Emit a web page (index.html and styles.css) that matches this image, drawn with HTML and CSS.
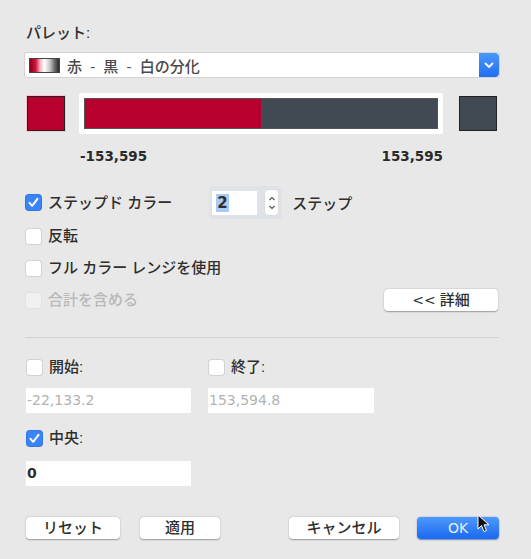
FILE: index.html
```html
<!DOCTYPE html>
<html lang="ja">
<head>
    <meta charset="UTF-8">
    <title>カラーの編集</title>
    <link rel="stylesheet" href="styles.css">
</head>
<body>
    <div class="dialog">
        <div class="field-label">パレット:</div>

        <!-- palette select -->
        <div class="select">
            <span class="select-ramp"></span>
            <span class="select-text">赤 - 黒 - 白の分化</span>
            <span class="select-arrow">
                <svg width="10" height="7" viewBox="0 0 10 7"><path d="M1.5 1.5 L5 5 L8.5 1.5" fill="none" stroke="#fff" stroke-width="1.8" stroke-linecap="round" stroke-linejoin="round"/></svg>
            </span>
        </div>

        <!-- color ramp preview -->
        <div class="ramp">
            <div class="swatch swatch-start"></div>
            <div class="ramp-frame">
                <div class="ramp-bar">
                    <div class="ramp-step ramp-red"></div>
                    <div class="ramp-step ramp-dark"></div>
                </div>
            </div>
            <div class="swatch swatch-end"></div>
        </div>
        <div class="ramp-values">
            <span>-153,595</span>
            <span>153,595</span>
        </div>

        <!-- options -->
        <div class="opt-row opt-first">
            <label class="check"><span class="box checked"></span>ステップド カラー</label>
            <div class="stepper-wrap">
                <div class="num-input"><span class="sel">2</span></div>
                <div class="stepper">
                    <svg width="8" height="18" viewBox="0 0 8 18"><path d="M1.5 6 L4 3.5 L6.5 6" fill="none" stroke="#555" stroke-width="1.2"/><path d="M1.5 12 L4 14.5 L6.5 12" fill="none" stroke="#555" stroke-width="1.2"/></svg>
                </div>
            </div>
            <span class="step-label">ステップ</span>
        </div>
        <div class="opt-row">
            <label class="check"><span class="box"></span>反転</label>
        </div>
        <div class="opt-row">
            <label class="check"><span class="box"></span>フル カラー レンジを使用</label>
        </div>
        <div class="opt-row opt-split">
            <label class="check disabled"><span class="box"></span>合計を含める</label>
            <button class="btn btn-detail"><span class="latin">&lt;&lt;</span> 詳細</button>
        </div>

        <div class="divider"></div>

        <!-- range -->
        <div class="range-grid">
            <label class="check"><span class="box"></span>開始:</label>
            <label class="check"><span class="box"></span>終了:</label>
            <div class="text-input placeholder">-22,133.2</div>
            <div class="text-input placeholder">153,594.8</div>
        </div>
        <div class="center-block">
            <label class="check"><span class="box checked"></span>中央:</label>
            <div class="text-input">0</div>
        </div>

        <!-- footer buttons -->
        <div class="footer">
            <div class="footer-left">
                <button class="btn btn-reset">リセット</button>
                <button class="btn btn-apply">適用</button>
            </div>
            <div class="footer-right">
                <button class="btn btn-cancel">キャンセル</button>
                <button class="btn btn-ok"><span class="latin">OK</span></button>
            </div>
            <svg class="cursor" width="14" height="20" viewBox="0 0 14 20"><path d="M1 1 L1 15 L4.5 11.5 L7 17.5 L9.5 16.5 L7 10.8 L12 10.8 Z" fill="#111" stroke="#fff" stroke-width="1"/></svg>
        </div>
    </div>
</body>
</html>
```

FILE: styles.css
```css
html, body {
    margin: 0;
    padding: 0;
}

body {
    width: 531px;
    height: 559px;
    background: #e8e8e8;
    font-family: 'Liberation Sans', 'Noto Sans CJK JP', sans-serif;
    font-size: 15px;
    color: #2e2e2e;
    overflow: hidden;
}

.latin {
    font-family: 'DejaVu Sans', sans-serif;
    font-size: 14px;
}

.dialog {
    box-sizing: border-box;
    height: 559px;
    padding: 23px 32px 0 25px;
    border-left: 2px solid #dadada;
    margin-left: -2px;
}

.field-label {
    line-height: 20px;
    height: 20px;
    font-weight: 500;
    padding-left: 1px;
}

/* palette select */
.select {
    margin-top: 10px;
    height: 24px;
    background: #fff;
    box-shadow: 0 0 0 1px #d4d4d4;
    display: flex;
    align-items: center;
    border-radius: 2px;
}

.select-ramp {
    width: 31px;
    height: 15px;
    margin-left: 4px;
    border: 1px solid #444;
    box-sizing: border-box;
    background: linear-gradient(90deg, #8c0020 0%, #d4143a 20%, #f6b7c0 35%, #ffffff 50%, #c9c9c9 68%, #6a6a6a 85%, #2a2a2a 100%);
}

.select-text {
    margin-left: 7px;
    flex: 1;
    color: #4a4a4a;
    font-weight: 500;
    word-spacing: 4px;
}

.select-arrow {
    width: 20px;
    height: 24px;
    background: linear-gradient(#4a97fb, #1f6ff3);
    border-radius: 0 4px 4px 0;
    display: flex;
    align-items: center;
    justify-content: center;
}

/* ramp preview */
.ramp {
    margin-top: 15px;
    height: 42px;
    display: flex;
    align-items: center;
}

.swatch {
    width: 38px;
    height: 35px;
    box-sizing: border-box;
    border: 1px solid #222;
}

.swatch-start {
    margin-left: 2px;
    background: #b8002e;
    box-shadow: 0 0 0 1px #f3c6d0;
}

.swatch-end {
    margin-left: 16px;
    background: #414a53;
}

.ramp-frame {
    margin-left: 14px;
    width: 364px;
    height: 41px;
    box-sizing: border-box;
    background: #fff;
    padding: 5px 5px;
    border-radius: 2px;
}

.ramp-bar {
    display: flex;
    height: 31px;
    border: 1px solid #555;
    box-sizing: border-box;
}

.ramp-step {
    flex: 1;
}

.ramp-red {
    background: #b8002e;
}

.ramp-dark {
    background: #414a53;
}

.ramp-values {
    margin-top: 12px;
    height: 20px;
    line-height: 20px;
    width: 418px;
    padding-left: 55px;
    box-sizing: border-box;
    display: flex;
    justify-content: space-between;
    font-family: 'DejaVu Sans', sans-serif;
    font-weight: bold;
    font-size: 13.5px;
    color: #2a2a2a;
}

/* options */
.opt-row {
    height: 32px;
    display: flex;
    align-items: center;
}

.opt-first {
    margin-top: 19px;
    height: 35px;
}

.opt-split {
    justify-content: space-between;
}

.check {
    display: flex;
    align-items: center;
    gap: 7px;
    line-height: 20px;
    font-weight: 500;
}

.check.disabled {
    color: #b9b9b9;
}

.box {
    width: 15px;
    height: 15px;
    box-sizing: border-box;
    background: #fff;
    border-radius: 3px;
    box-shadow: 0 0 0 1px #d2d2d2;
    margin-left: 1px;
}

.check.disabled .box {
    background: #f1f1f1;
    box-shadow: 0 0 0 1px #e2e2e2;
}

.box.checked {
    background: #3a84f6 url("data:image/svg+xml;utf8,<svg xmlns='http://www.w3.org/2000/svg' width='15' height='15' viewBox='0 0 15 15'><path d='M3.5 7.8 L6.2 10.8 L11.5 3.8' fill='none' stroke='white' stroke-width='2' stroke-linecap='round' stroke-linejoin='round'/></svg>") no-repeat center;
    box-shadow: 0 0 0 1px #2f76e8;
}

.stepper-wrap {
    margin-left: 37px;
    display: flex;
    align-items: center;
    gap: 8px;
    padding: 4px 4px 4px 3px;
    background: #dfe2e7;
    border-radius: 3px;
}

.num-input {
    width: 45px;
    height: 24px;
    background: #fff;
    line-height: 24px;
    padding-left: 4px;
    box-sizing: border-box;
    font-family: 'DejaVu Sans', sans-serif;
    font-weight: bold;
    font-size: 15px;
}

.sel {
    background: #a9cbf6;
    padding: 0 1px;
}

.stepper {
    width: 13px;
    height: 25px;
    background: #fff;
    border-radius: 4px;
    display: flex;
    align-items: center;
    justify-content: center;
    box-shadow: 0 0 0 1px #dcdcdc;
}

.step-label {
    margin-left: 10px;
    font-weight: 500;
}

/* buttons */
.btn {
    font-family: inherit;
    font-size: 15px;
    font-weight: 500;
    color: #2e2e2e;
    background: #fff;
    border: none;
    border-radius: 4px;
    box-shadow: 0 0.5px 1.5px rgba(0, 0, 0, 0.35);
    height: 22px;
    padding: 0;
    line-height: 22px;
}

.btn-detail {
    width: 114px;
    margin-right: 1px;
}

.divider {
    margin-top: 21px;
    height: 1px;
    background: #d3d3d3;
}

.range-grid {
    margin-top: 18px;
    display: grid;
    grid-template-columns: 165px 166px;
    grid-template-rows: 22px 25px;
    column-gap: 17px;
    row-gap: 10px;
    padding-left: 1px;
}

.text-input {
    height: 25px;
    line-height: 25px;
    background: #fff;
    box-sizing: border-box;
    padding-left: 1px;
    font-family: 'DejaVu Sans', sans-serif;
    font-size: 14px;
    font-weight: bold;
}

.text-input.placeholder {
    color: #b2b2b2;
    font-weight: normal;
}

.center-block {
    margin-top: 14px;
    width: 165px;
    padding-left: 1px;
    display: flex;
    flex-direction: column;
    gap: 12px;
}

.center-block .check {
    height: 22px;
}

.footer {
    position: relative;
    margin-top: 31px;
    display: flex;
    justify-content: space-between;
    padding-left: 1px;
}

.footer-left, .footer-right {
    display: flex;
    gap: 20px;
}

.footer-right {
    gap: 18px;
}

.btn-reset {
    width: 94px;
}

.btn-apply {
    width: 80px;
}

.btn-cancel {
    width: 110px;
}

.btn-ok {
    width: 82px;
    color: #fff;
    background: linear-gradient(#4d99fb, #1a69f1);
    box-shadow: 0 0.5px 1.5px rgba(0, 40, 140, 0.5);
}

.btn-ok .latin {
    color: #e8f0ff;
}

.cursor {
    position: absolute;
    left: 452px;
    top: -3px;
}
```
